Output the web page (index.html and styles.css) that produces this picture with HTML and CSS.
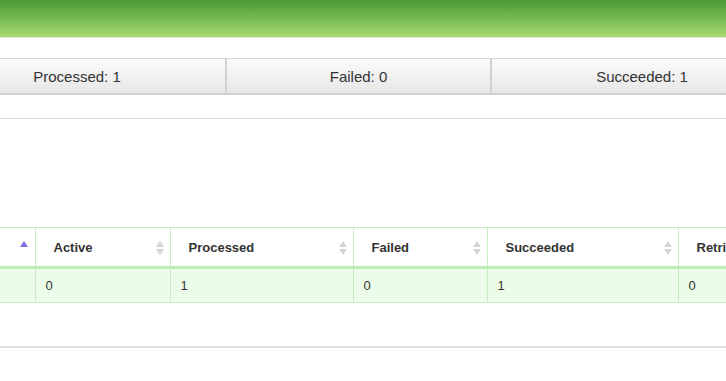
FILE: index.html
```html
<!DOCTYPE html>
<html lang="en">
<head>
    <meta charset="UTF-8">
    <meta name="viewport" content="width=device-width, initial-scale=1.0">
    <link rel="stylesheet" href="styles.css">
</head>
<body>
    <div class="topbar"></div>

    <div class="stats">
        <div class="stat stat-processed">Processed: 1</div>
        <div class="stat stat-failed">Failed: 0</div>
        <div class="stat stat-succeeded">Succeeded: 1</div>
    </div>

    <div class="spacer"></div>

    <table class="queues">
        <thead>
            <tr>
                <th class="col-name sorted">
                    <svg class="sort-up" width="8" height="6" viewBox="0 0 8 6"><path d="M4 0L8 6H0Z" fill="#7c6ee0"/></svg>
                </th>
                <th class="col-active">Active <svg class="sort" width="8" height="14" viewBox="0 0 8 14"><path d="M4 0L8 6H0Z M0 8H8L4 14Z" fill="#d4d4d4"/></svg></th>
                <th class="col-processed">Processed <svg class="sort" width="8" height="14" viewBox="0 0 8 14"><path d="M4 0L8 6H0Z M0 8H8L4 14Z" fill="#d4d4d4"/></svg></th>
                <th class="col-failed">Failed <svg class="sort" width="8" height="14" viewBox="0 0 8 14"><path d="M4 0L8 6H0Z M0 8H8L4 14Z" fill="#d4d4d4"/></svg></th>
                <th class="col-succeeded">Succeeded <svg class="sort" width="8" height="14" viewBox="0 0 8 14"><path d="M4 0L8 6H0Z M0 8H8L4 14Z" fill="#d4d4d4"/></svg></th>
                <th class="col-retried">Retried <svg class="sort" width="8" height="14" viewBox="0 0 8 14"><path d="M4 0L8 6H0Z M0 8H8L4 14Z" fill="#d4d4d4"/></svg></th>
            </tr>
        </thead>
        <tbody>
            <tr>
                <td></td>
                <td>0</td>
                <td>1</td>
                <td>0</td>
                <td>1</td>
                <td>0</td>
            </tr>
        </tbody>
    </table>

    <div class="footer-line"></div>
</body>
</html>
```

FILE: styles.css
```css
body {
    font-family: 'Liberation Sans', Arial, Helvetica, sans-serif;
    margin: 0;
    color: #333;
    background: #fff;
    overflow: hidden;
}

.topbar {
    height: 37px;
    background: linear-gradient(to bottom, #4b9936 0%, #7cbd55 55%, #a9d873 100%);
    border-bottom: 1px solid #e2e2e2;
}

.stats {
    display: flex;
    margin-top: 20px;
    margin-left: -71px;
    width: 1000px;
    border-top: 1px solid #d6d6d6;
    border-bottom: 2px solid #cfcfcf;
}

.stat {
    height: 34px;
    display: flex;
    align-items: center;
    justify-content: center;
    font-size: 15px;
    color: #333;
    background: linear-gradient(to bottom, #fbfbfb 0%, #e7e7e7 100%);
    border-right: 2px solid #d2d2d2;
}

.stat-processed { width: 296px; }
.stat-failed { width: 263px; }
.stat-succeeded { width: 300px; }

.spacer {
    height: 23px;
    border-bottom: 1px solid #dedede;
}

.queues {
    margin-top: 108px;
    border-collapse: collapse;
    table-layout: fixed;
    width: 858px;
    font-size: 13px;
}

.queues th,
.queues td {
    box-sizing: border-box;
}

.queues th {
    position: relative;
    height: 40px;
    padding: 0 0 0 18px;
    text-align: left;
    font-weight: bold;
    color: #333;
    border-top: 1px solid #c6efc0;
    border-left: 1px solid #c6efc0;
    border-bottom: 3px solid #bcedb4;
    background: #fff;
}

.queues th:first-child {
    border-left: none;
}

.queues .sort {
    position: absolute;
    right: 6px;
    top: 13px;
}

.queues .sort-up {
    position: absolute;
    right: 7px;
    top: 13px;
}

.col-name { width: 35px; }
.col-active { width: 135px; }
.col-processed { width: 183px; }
.col-failed { width: 134px; }
.col-succeeded { width: 191px; }
.col-retried { width: 180px; }

.queues td {
    height: 35px;
    padding: 0 0 0 10px;
    background: #ebfde8;
    border-left: 1px solid #c6efc0;
    border-bottom: 1px solid #c6efc0;
    color: #333;
}

.queues td:first-child {
    border-left: none;
}

.footer-line {
    margin-top: 43px;
    height: 0;
    border-top: 2px solid #e0e0e0;
}
```
